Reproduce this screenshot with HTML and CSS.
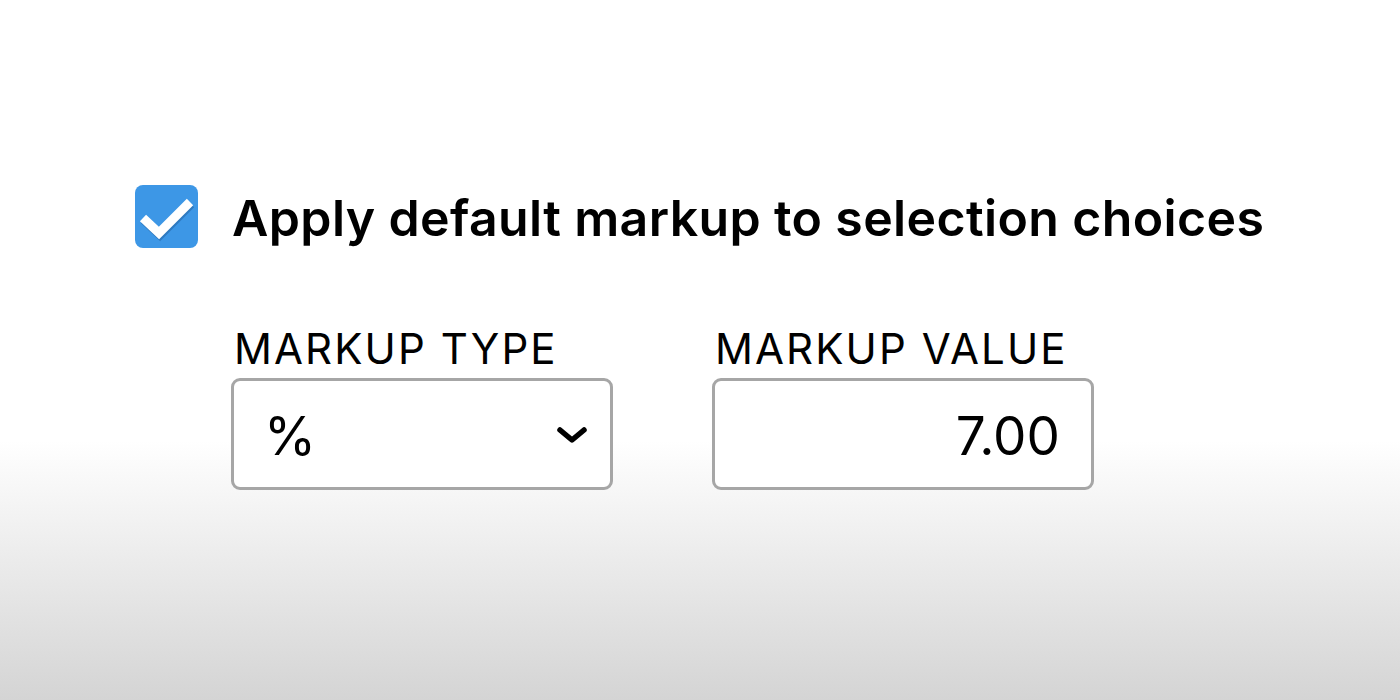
FILE: index.html
```html
<!DOCTYPE html>
<html>
<head>
<meta charset="utf-8">
<link rel="stylesheet" href="styles.css">
</head>
<body>
<main class="panel">
  <div class="check-row">
    <span class="checkbox">
      <svg viewBox="0 0 63 63" width="63" height="63">
        <polyline class="shadow" points="9,35 25,50 56,19" />
        <polyline class="tick" points="8,33 24,48 55,17" />
      </svg>
    </span>
    <span class="title">Apply default markup to selection choices</span>
  </div>
  <div class="fields">
    <div class="field">
      <div class="label">MARKUP TYPE</div>
      <div class="box select">
        <span class="value">%</span>
        <svg class="chevron" viewBox="0 0 32 18" width="32" height="18">
          <polyline points="4,4 16,14 28,4" />
        </svg>
      </div>
    </div>
    <div class="field">
      <div class="label">MARKUP VALUE</div>
      <div class="box input">
        <span class="value">7.00</span>
      </div>
    </div>
  </div>
</main>
</body>
</html>
```

FILE: styles.css
```css
html, body {
  margin: 0;
  height: 100%;
}
body {
  background: linear-gradient(to bottom, #ffffff 0%, #ffffff 63%, #d4d4d4 100%);
  font-family: Inter, "Noto Sans", sans-serif;
  color: #000;
  overflow: hidden;
}
.panel {
  padding: 185px 0 0 135px;
}
.check-row {
  display: flex;
  align-items: center;
  gap: 34px;
  height: 63px;
}
.checkbox {
  width: 63px;
  height: 63px;
  border-radius: 8px;
  background: #3d97e6;
  display: block;
  flex: none;
}
.checkbox svg {
  display: block;
}
.checkbox polyline {
  fill: none;
  stroke-width: 9;
  stroke-linecap: butt;
  stroke-linejoin: miter;
}
.checkbox .shadow {
  stroke: #1f5e9c;
  opacity: 0.5;
}
.checkbox .tick {
  stroke: #ffffff;
}
.title {
  font-size: 50px;
  font-weight: 600;
  letter-spacing: 0.37px;
  line-height: 1;
  margin-top: 2px;
}
.fields {
  display: flex;
  gap: 99px;
  margin-top: 76px;
  margin-left: 96px;
}
.field {
  width: 382px;
}
.label {
  font-size: 42px;
  font-weight: 400;
  line-height: 50px;
  letter-spacing: 2.1px;
  padding-left: 3px;
  margin-bottom: 4px;
}
.box {
  box-sizing: border-box;
  height: 112px;
  border: 3px solid #a6a6a6;
  border-radius: 9px;
  background: #ffffff;
  display: flex;
  align-items: center;
}
.value {
  font-size: 53px;
  line-height: 1;
  padding-top: 4px;
}
.select {
  justify-content: space-between;
  padding: 0 22px 0 30px;
}
.input {
  justify-content: flex-end;
  padding: 0 31px 0 20px;
}
.chevron {
  margin-top: 2px;
}
.chevron polyline {
  fill: none;
  stroke: #000;
  stroke-width: 5.5;
  stroke-linecap: round;
  stroke-linejoin: round;
}
```
